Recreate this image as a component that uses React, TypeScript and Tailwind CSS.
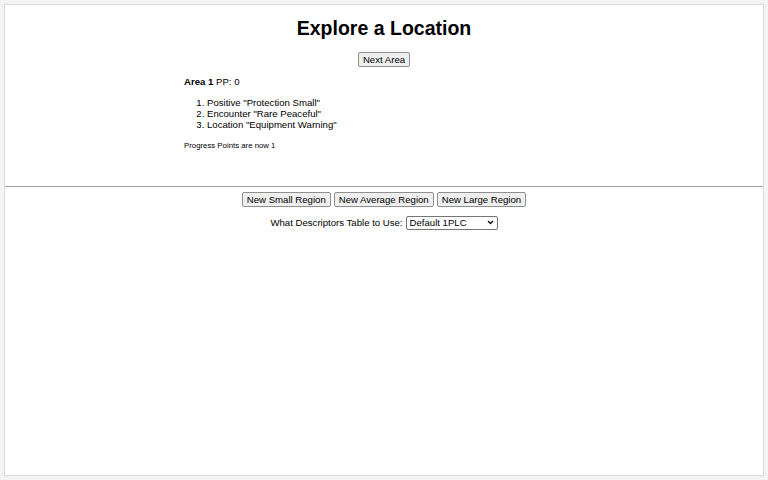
import React from "react";

const btn =
  "bg-[#efefef] border border-[#8f8f8f] rounded-[2px] px-[4px] h-[15px] leading-[13px] text-[9.6px] text-black";

export default function App() {
  return (
    <div
      className="w-[768px] h-[480px] bg-[#f4f4f4] p-[4px] text-black"
      style={{ fontFamily: '"Liberation Sans", Arial, sans-serif' }}
    >
      <div className="h-[472px] bg-white border border-[#dcdcdc] flex flex-col">
        <h1 className="text-[19.5px] font-bold text-center mt-[12px] leading-[23px]">Explore a Location</h1>
        <div className="flex justify-center mt-[12px]">
          <button className={btn}>Next Area</button>
        </div>
        <div className="w-[400px] mx-auto mt-[9px] text-[9.6px] leading-[11px]">
          <div>
            <b>Area 1</b> PP: 0
          </div>
          <ol className="list-decimal pl-[23px] mt-[10px]">
            <li>Positive "Protection Small"</li>
            <li>Encounter "Rare Peaceful"</li>
            <li>Location "Equipment Warning"</li>
          </ol>
          <div className="text-[7.8px] leading-[9px] mt-[11px]">Progress Points are now 1</div>
        </div>
        <div className="border-t border-[#a0a0a0] mt-[36px]" />
        <div className="flex justify-center gap-[3px] mt-[5px]">
          <button className={btn}>New Small Region</button>
          <button className={btn}>New Average Region</button>
          <button className={btn}>New Large Region</button>
        </div>
        <div className="flex justify-center items-center mt-[9px] text-[9.6px] gap-[3px]">
          <span>What Descriptors Table to Use:</span>
          <div className="relative">
            <select className="appearance-none block h-[14px] w-[92px] border border-[#767676] rounded-[2px] text-[9.6px] leading-[12px] bg-white pl-[3px]">
              <option>Default 1PLC</option>
            </select>
            <svg
              className="absolute right-[4px] top-[4px] pointer-events-none"
              width="7"
              height="5"
              viewBox="0 0 7 5"
            >
              <path d="M1 1 L3.5 3.5 L6 1" stroke="#000" strokeWidth="1.3" fill="none" />
            </svg>
          </div>
        </div>
      </div>
    </div>
  );
}
